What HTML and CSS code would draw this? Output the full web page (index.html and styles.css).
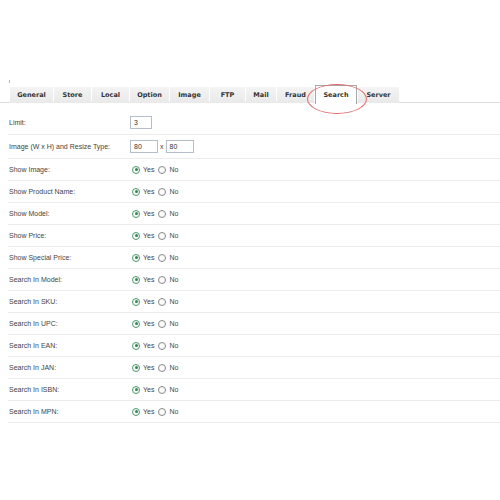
FILE: index.html
```html
<!DOCTYPE html>
<html>
<head>
<meta charset="utf-8">
<link rel="stylesheet" href="styles.css">
</head>
<body>
<div class="page">
  <div class="tick"></div>
  <div class="tabs">
    <span class="tab">General</span>
    <span class="tab">Store</span>
    <span class="tab">Local</span>
    <span class="tab">Option</span>
    <span class="tab">Image</span>
    <span class="tab">FTP</span>
    <span class="tab">Mail</span>
    <span class="tab">Fraud</span>
    <span class="tab active">Search</span>
    <span class="tab">Server</span>
  </div>
  <div class="circle"></div>
  <div class="form">
    <div class="row first"><span class="label">Limit:</span><span class="value"><span class="input small">3</span></span></div>
    <div class="row tall"><span class="label">Image (W x H) and Resize Type:</span><span class="value"><span class="input mid">80</span><span class="x">x</span><span class="input mid">80</span></span></div>
    <div class="row"><span class="label">Show Image:</span><span class="value"><span class="radio on"></span><span class="opt">Yes</span><span class="radio"></span><span class="opt">No</span></span></div>
    <div class="row"><span class="label">Show Product Name:</span><span class="value"><span class="radio on"></span><span class="opt">Yes</span><span class="radio"></span><span class="opt">No</span></span></div>
    <div class="row"><span class="label">Show Model:</span><span class="value"><span class="radio on"></span><span class="opt">Yes</span><span class="radio"></span><span class="opt">No</span></span></div>
    <div class="row"><span class="label">Show Price:</span><span class="value"><span class="radio on"></span><span class="opt">Yes</span><span class="radio"></span><span class="opt">No</span></span></div>
    <div class="row"><span class="label">Show Special Price:</span><span class="value"><span class="radio on"></span><span class="opt">Yes</span><span class="radio"></span><span class="opt">No</span></span></div>
    <div class="row"><span class="label">Search In Model:</span><span class="value"><span class="radio on"></span><span class="opt">Yes</span><span class="radio"></span><span class="opt">No</span></span></div>
    <div class="row"><span class="label">Search In SKU:</span><span class="value"><span class="radio on"></span><span class="opt">Yes</span><span class="radio"></span><span class="opt">No</span></span></div>
    <div class="row"><span class="label">Search In UPC:</span><span class="value"><span class="radio on"></span><span class="opt">Yes</span><span class="radio"></span><span class="opt">No</span></span></div>
    <div class="row"><span class="label">Search In EAN:</span><span class="value"><span class="radio on"></span><span class="opt">Yes</span><span class="radio"></span><span class="opt">No</span></span></div>
    <div class="row"><span class="label">Search In JAN:</span><span class="value"><span class="radio on"></span><span class="opt">Yes</span><span class="radio"></span><span class="opt">No</span></span></div>
    <div class="row"><span class="label">Search In ISBN:</span><span class="value"><span class="radio on"></span><span class="opt">Yes</span><span class="radio"></span><span class="opt">No</span></span></div>
    <div class="row last"><span class="label">Search In MPN:</span><span class="value"><span class="radio on"></span><span class="opt">Yes</span><span class="radio"></span><span class="opt">No</span></span></div>
  </div>
</div>
</body>
</html>
```
FILE: styles.css
```css
html, body {
  margin: 0;
  padding: 0;
  background: #fff;
}
body {
  font-family: "Liberation Sans", Arial, sans-serif;
  font-size: 7px;
  color: #444;
}
.page {
  position: relative;
  width: 500px;
  height: 500px;
  padding-top: 80px;
  box-sizing: border-box;
}
.tick {
  width: 1px;
  height: 3px;
  margin-left: 9px;
  background: #bbb;
}
.tabs {
  display: grid;
  grid-template-columns: 44px 38px 38px 40px 40px 36px 31px 38px 43px 42px;
  margin-top: 2px;
  padding-left: 10px;
  height: 17px;
  align-items: end;
  border-bottom: 1px solid #dcdcdc;
}
.tab {
  height: 16px;
  line-height: 16px;
  margin-right: 1px;
  text-align: center;
  font-family: "DejaVu Sans", Verdana, sans-serif;
  font-weight: bold;
  font-size: 6.5px;
  color: #333;
  background: linear-gradient(#f4f4f4, #e9e9e9);
}
.tab.active {
  height: 19px;
  line-height: 19px;
  background: #fff;
  border: 1px solid #a9a9a9;
  border-bottom: none;
  margin-bottom: -1px;
  box-sizing: border-box;
}
.circle {
  position: absolute;
  left: 307px;
  top: 84px;
  width: 60px;
  height: 30px;
  border: 1px solid #e06a6a;
  border-radius: 50%;
  box-sizing: border-box;
}
.form {
  margin-top: 8px;
  margin-left: 8px;
}
.row {
  display: flex;
  align-items: center;
  height: 22px;
  box-sizing: border-box;
  border-top: 1px solid #ececec;
}
.row.first {
  border-top: none;
  height: 23px;
}
.row.tall {
  height: 24px;
}
.row.last {
  height: 23px;
  border-bottom: 1px solid #ececec;
}
.label {
  width: 121px;
  padding-left: 1px;
}
.value {
  display: flex;
  align-items: center;
}
.input {
  height: 13px;
  line-height: 11px;
  border: 1px solid #b5bfcc;
  box-sizing: border-box;
  padding-left: 3px;
  font-size: 7px;
  color: #333;
}
.input.small {
  width: 22px;
}
.input.mid {
  width: 28px;
}
.x {
  margin: 0 2px;
}
.radio {
  width: 8px;
  height: 8px;
  border: 1px solid #8a8a8a;
  border-radius: 50%;
  box-sizing: border-box;
  margin-left: 2px;
  margin-right: 3px;
  position: relative;
  background: #fafafa;
}
.radio.on {
  border-color: #4a9a6a;
}
.radio.on::after {
  content: "";
  position: absolute;
  left: 1.5px;
  top: 1.5px;
  width: 3px;
  height: 3px;
  border-radius: 50%;
  background: #2e8a4e;
}
.opt {
  margin-right: 2px;
}
```
